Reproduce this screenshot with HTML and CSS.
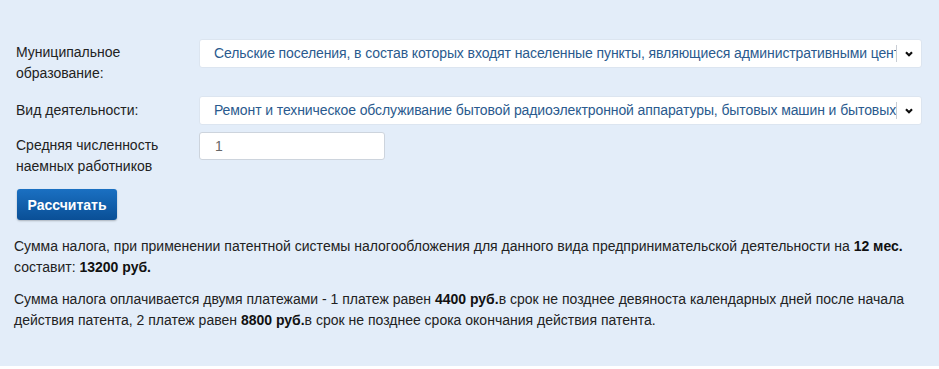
FILE: index.html
```html
<!DOCTYPE html>
<html lang="ru">
<head>
  <meta charset="UTF-8" />
  <meta name="viewport" content="width=device-width, initial-scale=1.0"/>
  <title>Калькулятор патента</title>
  <link rel="stylesheet" href="styles.css">
</head>
<body>

  <!-- Калькулятор стоимости патента -->
  <div class="calc-panel">
    <div class="form-row row-mo">
      <label class="form-label">Муниципальное образование:</label>
      <div class="select-box">
        <span class="select-text">Сельские поселения, в состав которых входят населенные пункты, являющиеся административными центрами муниципальных районов</span>
        <span class="select-arrow">
          <svg width="8" height="6" viewBox="0 0 8 6"><path d="M1 1.2 L4 4.2 L7 1.2" fill="none" stroke="#111" stroke-width="2.2"/></svg>
        </span>
      </div>
    </div>

    <div class="form-row row-vid">
      <label class="form-label">Вид деятельности:</label>
      <div class="select-box">
        <span class="select-text">Ремонт и техническое обслуживание бытовой радиоэлектронной аппаратуры, бытовых машин и бытовых приборов</span>
        <span class="select-arrow">
          <svg width="8" height="6" viewBox="0 0 8 6"><path d="M1 1.2 L4 4.2 L7 1.2" fill="none" stroke="#111" stroke-width="2.2"/></svg>
        </span>
      </div>
    </div>

    <div class="form-row row-num">
      <label class="form-label">Средняя численность наемных работников</label>
      <input type="text" class="num-input" value="1" />
    </div>

    <button class="calc-btn">Рассчитать</button>

    <p class="result">Сумма налога, при применении патентной системы налогообложения для данного вида предпринимательской деятельности на <b>12 мес.</b> составит: <b>13200 руб.</b></p>
    <p class="result">Сумма налога оплачивается двумя платежами - 1 платеж равен <b>4400 руб.</b>в срок не позднее девяноста календарных дней после начала действия патента, 2 платеж равен <b>8800 руб.</b>в срок не позднее срока окончания действия патента.</p>
  </div>

</body>
</html>
```

FILE: styles.css
```css
* {
  margin: 0;
  padding: 0;
  box-sizing: border-box;
}

body {
  font-family: 'Liberation Sans', Arial, sans-serif;
  font-size: 14px;
  color: #222;
  background: #fff;
}

.calc-panel {
  background: #e3edf9;
  height: 366px;
  padding: 39px 17px 0 14px;
}

.form-row {
  display: flex;
  align-items: flex-start;
  margin-bottom: 7px;
}

.form-label {
  width: 185px;
  padding-left: 2px;
  padding-top: 3px;
  padding-right: 20px;
  line-height: 21px;
  flex-shrink: 0;
}

.row-mo {
  margin-bottom: 12px;
}

.row-vid {
  align-items: center;
}

.row-vid .form-label {
  padding-top: 0;
}

.select-box {
  flex: 1;
  height: 29px;
  background: #fff;
  border: 1px solid #dce5f0;
  border-radius: 3px;
  display: flex;
  align-items: center;
  padding-left: 14px;
  overflow: hidden;
}

.select-text {
  flex: 1;
  white-space: nowrap;
  overflow: hidden;
  color: #2a5a8e;
  font-size: 14px;
  letter-spacing: -0.1px;
  border-right: 1px solid #c8cdd4;
  height: 17px;
  line-height: 17px;
}

.select-arrow {
  width: 24px;
  display: flex;
  padding-left: 8px;
}

.num-input {
  width: 186px;
  height: 28px;
  border: 1px solid #cdd4dd;
  border-radius: 3px;
  padding-left: 15px;
  font-family: inherit;
  font-size: 14px;
  color: #666;
  background: #fff;
}

.calc-btn {
  display: block;
  margin: 12px 0 16px 3px;
  width: 100px;
  height: 31px;
  border: none;
  border-radius: 3px;
  background: linear-gradient(#1a70c2, #0a4f96);
  color: #fff;
  font-family: inherit;
  font-size: 14px;
  font-weight: bold;
  box-shadow: 0 1px 2px rgba(0, 0, 0, 0.25);
  cursor: pointer;
}

.result {
  line-height: 21px;
  margin-bottom: 11px;
  color: #222;
}

.result b {
  color: #111;
}
```
